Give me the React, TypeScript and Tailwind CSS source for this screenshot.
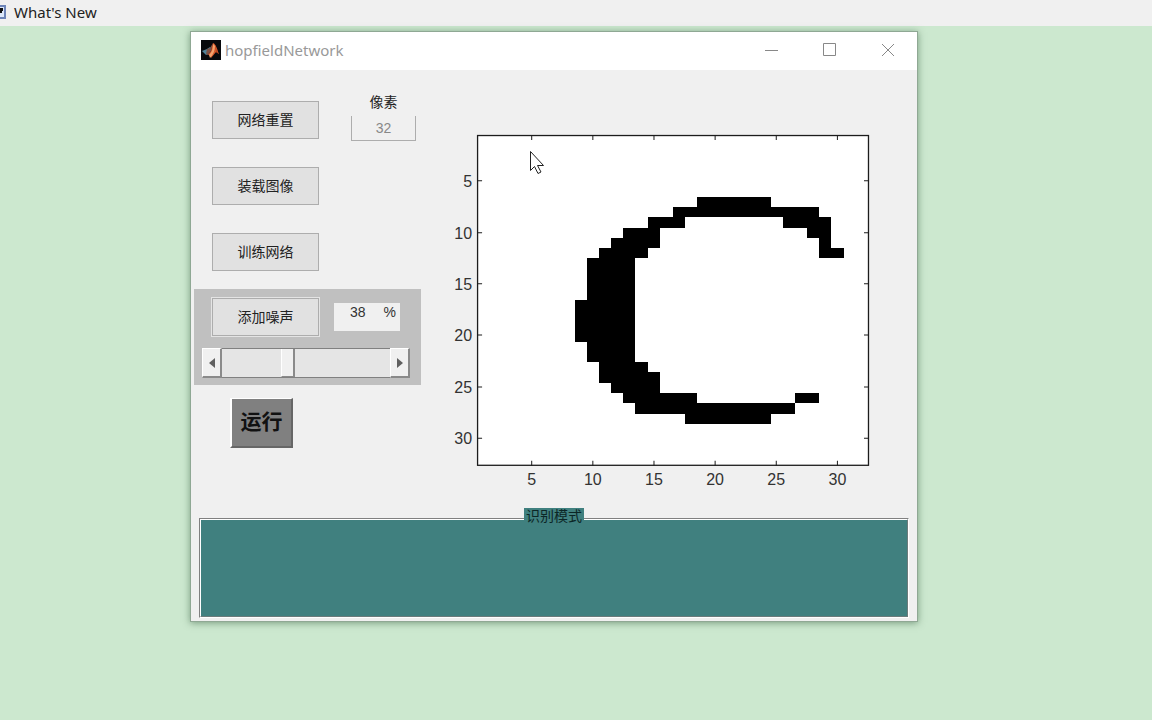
import React, { useState } from 'react';

const uiFont = "font-['Liberation_Sans','Noto_Sans_CJK_SC',sans-serif]";

// [row, first column, end column] of each black run in the 32 x 32 pattern
const runs = [
  [6, 18, 24],
  [7, 16, 28],
  [8, 14, 17],
  [8, 25, 29],
  [9, 12, 15],
  [9, 27, 29],
  [10, 11, 15],
  [10, 28, 29],
  [11, 10, 14],
  [11, 28, 30],
  [12, 9, 13],
  [13, 9, 13],
  [14, 9, 13],
  [15, 9, 13],
  [16, 8, 13],
  [17, 8, 13],
  [18, 8, 13],
  [19, 8, 13],
  [20, 9, 13],
  [21, 9, 13],
  [22, 10, 14],
  [23, 10, 15],
  [24, 11, 15],
  [25, 12, 18],
  [25, 26, 28],
  [26, 13, 26],
  [27, 17, 24],
];

const ticks = [5, 10, 15, 20, 25, 30];

const left = 30;
const top = 10;
const width = 391;
const height = 330;
const toX = (col: number) => Math.round(left + (col * (width - 1)) / 32);
const toY = (row: number) => Math.round(top + (row * (height - 1)) / 32);

function PatternPlot() {
  return (
    <svg viewBox="0 0 428 370" className="block w-full h-auto" role="img" aria-label="pattern">
      <rect x={left + 0.5} y={top + 0.5} width={width - 1} height={height - 1} fill="#fff" stroke="#1c1c1c" strokeWidth="1.3" />
      {runs.map(([row, from, to]) => (
        <rect
          key={`${row}-${from}`}
          x={toX(from)}
          y={toY(row)}
          width={toX(to) - toX(from)}
          height={toY(row + 1) - toY(row)}
          shapeRendering="crispEdges"
        />
      ))}
      {ticks.map((t) => {
        const x = toX(t - 0.5) - 0.5;
        const y = toY(t - 0.5) - 0.5;
        return (
          <g key={t} fontFamily="Liberation Sans, sans-serif" fontSize="16" fill="#333">
            <path
              d={`M${x} ${top}v5M${x} ${top + height}v-5M${left} ${y}h5M${left + width} ${y}h-5`}
              stroke="#1c1c1c"
            />
            <text x={x} y={top + height + 19} textAnchor="middle">{t}</text>
            <text x={left - 5} y={y + 6} textAnchor="end">{t}</text>
          </g>
        );
      })}
    </svg>
  );
}

function MatlabLogo() {
  return (
    <svg viewBox="0 0 20 20" className="w-5 h-5 shrink-0" aria-hidden="true">
      <rect width="20" height="20" fill="#08090c" />
      <path d="M1 11l5-2 3-2 1 1-3 6-2 1z" fill="#4f8299" />
      <path d="M6 9l3-1 3-5-2 8-3 4-2-1z" fill="#7d5348" />
      <path d="M7 15l3-4 2-8c3 1 4 6 6 11l-3-2-5 6-1-3z" fill="#d9592b" />
      <path d="M12 4c0 5-1 8-4 11l1 3c3-3 5-8 5-12z" fill="#f3a36e" />
      <path d="M14 5c1 3 1 5 4 9l-3-2z" fill="#b3431f" />
    </svg>
  );
}

function PushButton({ children }: { children: React.ReactNode }) {
  return (
    <button
      type="button"
      className="w-[107px] h-[38px] shrink-0 bg-[#e1e1e1] border border-[#adadad] text-sm text-[#222]"
    >
      {children}
    </button>
  );
}

function ArrowButton({ label, d, onClick }: { label: string; d: string; onClick: () => void }) {
  return (
    <button
      type="button"
      aria-label={label}
      onClick={onClick}
      className="w-5 h-full shrink-0 flex items-center justify-center bg-[#f0f0f0] border-t border-l border-b-2 border-r-2 border-t-white border-l-white border-b-[#8a8a8a] border-r-[#8a8a8a]"
    >
      <svg viewBox="0 0 6 10" className="w-[6px] h-[10px]" aria-hidden="true">
        <path d={d} fill="#606060" />
      </svg>
    </button>
  );
}

export default function App() {
  const [noise, setNoise] = useState(38);

  return (
    <div className={`min-h-screen bg-[#cce8cf] ${uiFont}`}>
      <header className="h-[26px] pb-[2px] flex items-center bg-[#f0f0f0] overflow-hidden">
        <svg viewBox="0 0 6 14" className="w-[6px] h-[14px]" aria-hidden="true">
          <path d="M0 0h6v14H0z" fill="#6d84b8" />
          <path d="M0 2h4v10H0z" fill="#dce8fa" />
          <path d="M0 3h3v3H2v2H0z" fill="#111" />
        </svg>
        <a href="#" className="ml-2 font-['Noto_Sans',sans-serif] text-[15px] leading-6 text-[#222]">What's New</a>
      </header>

      <main className="pt-[5px] pl-[190px] pr-[234px]">
        <div className="border border-[#8fa894] bg-[#f0f0f0] shadow-[0_1px_7px_rgba(50,90,60,0.55)]">
          <div className="h-[38px] pb-[2px] pl-[10px] flex items-center bg-white">
            <MatlabLogo />
            <h1 className="ml-1 flex-1 font-['Noto_Sans',sans-serif] text-[15px] text-[#999]">hopfieldNetwork</h1>
            <button type="button" aria-label="Minimize" className="w-[58px] h-full flex items-center justify-center">
              <svg viewBox="0 0 14 14" className="w-[14px] h-[14px]" fill="none" stroke="#888"><path d="M0 7.5h13" /></svg>
            </button>
            <button type="button" aria-label="Maximize" className="w-[58px] h-full flex items-center justify-center">
              <svg viewBox="0 0 14 14" className="w-[14px] h-[14px]" fill="none" stroke="#888"><path d="M.5 .5h12v12H.5z" /></svg>
            </button>
            <button type="button" aria-label="Close" className="w-[58px] h-full flex items-center justify-center">
              <svg viewBox="0 0 14 14" className="w-[14px] h-[14px]" fill="none" stroke="#888"><path d="M1 1l12 12M13 1L1 13" /></svg>
            </button>
          </div>

          <div className="flex items-start">
            <div className="w-[230px] shrink-0 pl-[3px] pt-[24px]">
              <div className="flex pl-[18px]">
                <div className="flex flex-col gap-7 pt-[7px]">
                  <PushButton>网络重置</PushButton>
                  <PushButton>装载图像</PushButton>
                  <PushButton>训练网络</PushButton>
                </div>
                <div className="ml-8 flex flex-col items-center">
                  <label htmlFor="pixels" className="h-[22px] text-sm leading-[16px] text-[#222]">像素</label>
                  <input
                    id="pixels"
                    disabled
                    defaultValue="32"
                    className="w-[65px] h-[25px] text-center text-sm text-[#888] border border-t-0 border-[#adadad]"
                  />
                </div>
              </div>

              <div className="mt-[18px] h-[96px] w-[227px] pt-2 pl-2 bg-[#c0c0c0]">
                <div className="flex">
                  <div className="ml-[9px] border border-[#e4e4e4]">
                    <PushButton>添加噪声</PushButton>
                  </div>
                  <div className="ml-[14px] mt-[6px] w-[66px] h-7 pr-1 flex items-start justify-end bg-[#f0f0f0] text-sm leading-[18px] text-[#333]">
                    <output htmlFor="noise" className="mr-[18px]">{noise}</output>
                    <span>%</span>
                  </div>
                </div>
                <div className="mt-[11px] h-[30px] w-[208px] flex">
                  <ArrowButton label="Less noise" d="M6 0v10L0 5z" onClick={() => setNoise(Math.max(0, noise - 1))} />
                  <input
                    id="noise"
                    type="range"
                    min={0}
                    max={100}
                    value={noise}
                    aria-label="噪声"
                    onChange={(e) => setNoise(Number(e.target.value))}
                    className="flex-1 min-w-0 h-full appearance-none bg-[#e5e5e5] border-y border-[#808080] [&::-webkit-slider-thumb]:appearance-none [&::-webkit-slider-thumb]:w-[14px] [&::-webkit-slider-thumb]:h-[28px] [&::-webkit-slider-thumb]:bg-[#f0f0f0] [&::-webkit-slider-thumb]:border-l [&::-webkit-slider-thumb]:border-r-2 [&::-webkit-slider-thumb]:border-b [&::-webkit-slider-thumb]:border-l-white [&::-webkit-slider-thumb]:border-r-[#8a8a8a] [&::-webkit-slider-thumb]:border-b-[#8a8a8a]"
                  />
                  <ArrowButton label="More noise" d="M0 0v10L6 5z" onClick={() => setNoise(Math.min(100, noise + 1))} />
                </div>
              </div>

              <button
                type="button"
                className="mt-[13px] ml-[36px] w-[63px] h-[50px] pb-[2px] block bg-[#808080] border-t border-l-2 border-b-2 border-r-2 border-t-white border-l-white border-b-[#666] border-r-[#666] text-[21px] leading-6 font-bold text-[#111]"
              >
                运行
              </button>
            </div>

            <div className="relative flex-1 min-w-0 ml-[26px] mr-[41px] mt-[55px]">
              <PatternPlot />
              <svg viewBox="0 0 16 24" className="absolute left-[83px] top-[26px] w-4 h-6" aria-hidden="true">
                <path d="M.5 .5v19l4-4 3.500 7 3-1.500-3.500-6.500h6z" fill="#fff" stroke="#222" />
              </svg>
            </div>
          </div>

          <section
            aria-labelledby="result"
            className="relative mt-[22px] mx-2 mb-[3px] h-[100px] border border-t-[#808080] border-l-[#808080] border-b-white border-r-white"
          >
            <h2 id="result" className="absolute left-1/2 -top-[11px] -translate-x-1/2 px-[2px] h-[15px] bg-[#40807f] text-sm leading-[16px] whitespace-nowrap text-[#0c2626]">
              识别模式
            </h2>
            <div className="h-full bg-[#40807f] border border-t-white border-l-white border-b-[#6c7c7c] border-r-[#6c7c7c]" />
          </section>
        </div>
      </main>
    </div>
  );
}
